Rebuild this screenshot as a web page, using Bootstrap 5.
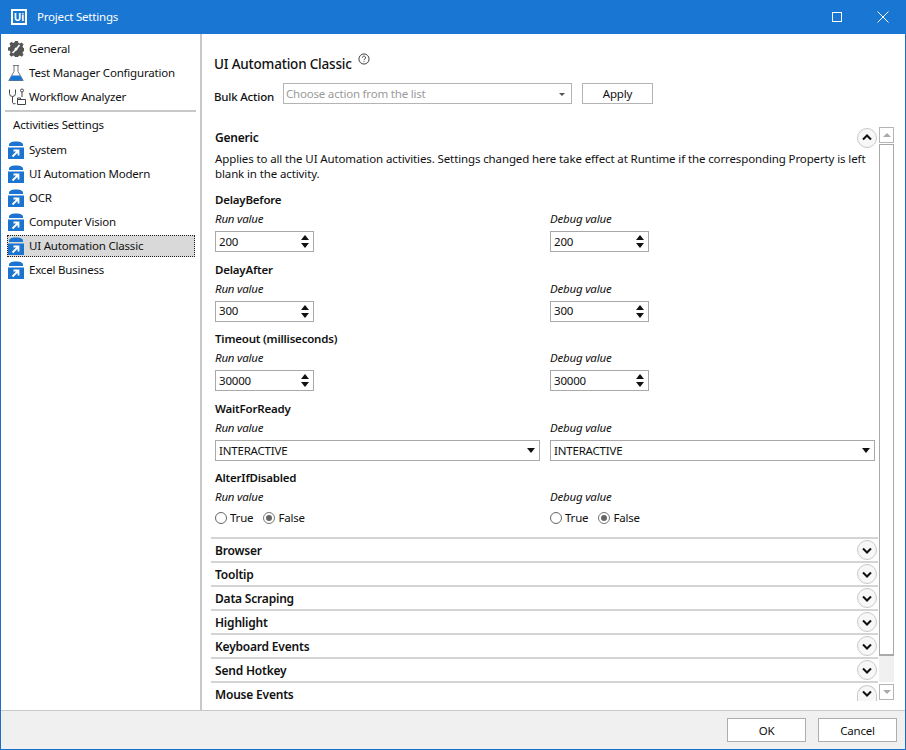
<!DOCTYPE html>
<html lang="en"><head><meta charset="utf-8"><title>Project Settings</title>
<link href="https://cdn.jsdelivr.net/npm/bootstrap@5.3.0/dist/css/bootstrap.min.css" rel="stylesheet">
<style>
html,body{height:100%;overflow:hidden}
body{font-family:"Noto Sans","Open Sans",sans-serif;font-size:11.5px;color:#111;background:#fff;letter-spacing:-.2px}
.win{height:750px;border:solid #1a6fc4;border-width:0 1px 1px 1px}
.tbar{height:34px;background:#1976d2;color:#fff;margin:0 -1px;padding-left:11px}
.logo{width:16px;height:16px;border:2px solid #fff;font-size:10px;font-weight:700;line-height:12px;text-align:center;letter-spacing:0;background:#1976d2}
.ttl{margin-left:10px}
.wbtn{width:46px;height:34px}
.side{width:201px;border-right:2px solid #c8c8c8;flex:none;padding-top:3px}
.sitem{height:24px;padding:0 1px;margin-left:6px;margin-right:5px}
.sitem svg{margin-right:5px;flex:none}
.sel{background:#d9d9d9;outline:1px dotted #222;outline-offset:-1px;height:22px;margin-top:1px;margin-bottom:1px}
.sep{border-top:2px solid #c8c8c8;margin:1px 4px 0 4px}
.shead{height:25px;padding-left:12px;margin-bottom:1px}
.mainp{min-width:0;padding-left:12px}
.ptitle{font-size:13.5px;font-weight:500;height:20px;line-height:20px;margin-top:20px}
.ptitle svg{margin:-1px 0 0 6px}
.bulk{height:21px;margin-top:9px}
.blab{width:69px;font-weight:500;padding-top:5px}
.fakesel{border:1px solid #b4b4b4;color:#9a9a9a;width:289px;height:21px;padding:1px 2px 0}
.caret{width:0;height:0;border-left:3px solid transparent;border-right:3px solid transparent;border-top:3px solid #555}
.applyb{width:71px;height:21px;margin-left:10px;border:1px solid #b4b4b4;background:#fff;font-size:11.5px;padding:0;color:#111;border-radius:0;letter-spacing:-.2px}
.pane{height:575px;margin-left:-3px;margin-top:23px}
.scrollc{width:667px;height:576px;overflow:hidden;flex:none}
.ghead{height:22px;margin-bottom:1px;padding:0 1px 0 4px;font-weight:600;font-size:12px}
.gtxt{padding-left:4px;line-height:15px;margin-top:2px;width:664px;margin-bottom:11px;letter-spacing:-.12px}
.fname{padding-left:4px;font-weight:600;line-height:16px;height:16px}
.flab{font-style:italic;line-height:16px;height:16px;margin-top:3px}
.fcols{padding-left:4px;margin-bottom:9.5px}
.lastc{margin-bottom:9px}
.fc1{width:335px;flex:none}
.fc2{width:325px;flex:none}
.spin{width:99px;height:21px;border:1px solid #a9a9a9;margin-top:4px;padding:0 4px 0 3px}
.arrows{gap:3px}
.arr-u,.arr-d{width:0;height:0;border-left:4px solid transparent;border-right:4px solid transparent}
.arr-u{border-bottom:5px solid #111}.arr-d{border-top:5px solid #111}
.drop{width:325px;height:21px;border:1px solid #a9a9a9;margin-top:4px;padding:1px 4px 0 3px}
.radios{height:21px;margin-top:2px;gap:10px}
.rad{width:12px;height:12px;border:1px solid #666;border-radius:50%;margin-right:3px;background:#fff}
.rad.on{position:relative;border-color:#777}
.rad.on::after{content:"";position:absolute;left:2px;top:2px;width:6px;height:6px;border-radius:50%;background:#666}
.sect{height:24px;border-top:2px solid #d4d4d4;padding:0 1px 0 4px;font-weight:600;font-size:12px;line-height:12px}
.sect>span:first-child{padding-top:1px}
.circ{width:20px;height:20px;border:1px solid #c9c9c9;border-radius:50%;background:#f7f7f7;flex:none}
.cup{margin-top:-1px}
.clipc{height:16px;align-self:flex-start;margin-top:2px;border-bottom:0;border-radius:10px 10px 0 0}
.sbar{width:15px;margin-left:1px;height:573px;flex:none}
.sbtn{height:16px;border:1px solid #b4b4b4;flex:none}
.sthumb{height:512px;border:1px solid #a9a9a9;border-bottom-width:2px;margin-top:1px;flex:none}
.strack{height:26px;background:#f0f0f0;flex:none}
.sdown{margin-top:2px}
.foot{height:39px;border-top:1px solid #c8c8c8;background:#f0f0f0;padding:7px 8px 0 0;gap:12px}
.fbtn{width:79px;height:24px;border:1px solid #adadad;background:#fff;padding:1px 0 0;font-size:11.5px;color:#111;border-radius:0;letter-spacing:-.2px}
.up-s,.dn-s{width:0;height:0;border-left:4px solid transparent;border-right:4px solid transparent}
.up-s{border-bottom:4px solid #aaa}.dn-s{border-top:4px solid #aaa}
</style></head><body>
<div class="win d-flex flex-column">
 <div class="tbar d-flex align-items-center flex-none">
  <div class="logo">Ui</div><div class="ttl">Project Settings</div>
  <div class="ms-auto d-flex">
   <div class="wbtn d-flex align-items-center justify-content-center"><svg width="10" height="10"><rect x=".5" y=".5" width="9" height="9" fill="none" stroke="#fff"/></svg></div>
   <div class="wbtn d-flex align-items-center justify-content-center"><svg width="12" height="12"><path d="M.5.5l11 11M11.500.5l-11 11" stroke="#fff" fill="none"/></svg></div>
  </div>
 </div>
 <div class="d-flex flex-grow-1" style="min-height:0">
  <div class="side">
   <div class="sitem d-flex align-items-center"><svg width="16" height="16" viewBox="0 0 16 16"><path fill="#555" d="M6.500 0h3l.4 2 1.500.6L13.100 1.500l2 2-1.100 1.700.6 1.500 1.900.4v3l-1.900.4-.6 1.500 1.100 1.700-2 2-1.700-1.100-1.500.6-.4 1.900h-3l-.4-1.900-1.500-.6-1.700 1.100-2-2L2 11.300l-.6-1.500L-.5 9.400v-3l1.900-.4L2 4.500.9 2.800l2-2L4.600 1.900l1.500-.6z" transform="translate(.5 0)"/><path d="M4.500 12l3.500-3.500M8 8.500l3.500-4.500" stroke="#fff" stroke-width="1.600"/><circle cx="8" cy="8" r="1.500" fill="#fff"/></svg>General</div>
   <div class="sitem d-flex align-items-center"><svg width="16" height="18" viewBox="0 0 16 18"><path d="M5 1.500h6M6 1.500v6L.8 16.500h14.400L10 7.500v-6" fill="#fff" stroke="#777"/><path d="M4 11.500h8l3 5H1z" fill="#1976d2"/></svg>Test Manager Configuration</div>
   <div class="sitem d-flex align-items-center"><svg width="18" height="18" viewBox="0 0 18 18" style="margin-right:3px" fill="none" stroke="#444"><path d="M1.500 1.500v4a3 3 0 0 0 6 0v-4M4.500 8.500v6a2 2 0 0 0 3 1"/><circle cx="14" cy="2.500" r="1.500"/><path d="M14 4v5M9.500 11.500h8v5h-8zM9.500 11.500v-1.500h3v1.500"/></svg>Workflow Analyzer</div>
   <div class="sep"></div>
   <div class="shead d-flex align-items-center">Activities Settings</div>
   <div class="sitem d-flex align-items-center"><svg width="16" height="18"><use href="#pk"/></svg>System</div>
   <div class="sitem d-flex align-items-center"><svg width="16" height="18"><use href="#pk"/></svg>UI Automation Modern</div>
   <div class="sitem d-flex align-items-center"><svg width="16" height="18"><use href="#pk"/></svg>OCR</div>
   <div class="sitem d-flex align-items-center"><svg width="16" height="18"><use href="#pk"/></svg>Computer Vision</div>
   <div class="sitem sel d-flex align-items-center"><svg width="16" height="18"><use href="#pk"/></svg>UI Automation Classic</div>
   <div class="sitem d-flex align-items-center"><svg width="16" height="18"><use href="#pk"/></svg>Excel Business</div>
  </div>
  <div class="mainp flex-grow-1">
   <div class="ptitle d-flex">UI Automation Classic<svg width="12" height="12" viewBox="0 0 13 13" fill="none" stroke="#333"><circle cx="6.500" cy="6.500" r="5.500"/><path d="M4.800 5a1.700 1.700 0 1 1 2.600 1.500c-.6.400-.9.700-.9 1.400"/><path d="M6.500 9v1"/></svg></div>
   <div class="bulk d-flex">
    <div class="blab">Bulk Action</div>
    <div class="fakesel d-flex align-items-center justify-content-between"><span>Choose action from the list</span><span class="caret me-1"></span></div>
    <button class="applyb btn">Apply</button>
   </div>
   <div class="pane d-flex">
    <div class="scrollc">
     <div class="ghead d-flex align-items-center justify-content-between"><span>Generic</span><span class="circ cup d-flex align-items-center justify-content-center"><svg width="10" height="7"><path d="M1 5.500l4-4 4 4" fill="none" stroke="#111" stroke-width="2"/></svg></span></div>
     <div class="gtxt">Applies to all the UI Automation activities. Settings changed here take effect at Runtime if the corresponding Property is left blank in the activity.</div>

     <div class="fname">DelayBefore</div>
     <div class="fcols d-flex">
      <div class="fc1"><div class="flab">Run value</div><div class="spin d-flex align-items-center justify-content-between"><span>200</span><span class="arrows d-flex flex-column"><i class="arr-u"></i><i class="arr-d"></i></span></div></div>
      <div class="fc2"><div class="flab">Debug value</div><div class="spin d-flex align-items-center justify-content-between"><span>200</span><span class="arrows d-flex flex-column"><i class="arr-u"></i><i class="arr-d"></i></span></div></div>
     </div>
     <div class="fname">DelayAfter</div>
     <div class="fcols d-flex">
      <div class="fc1"><div class="flab">Run value</div><div class="spin d-flex align-items-center justify-content-between"><span>300</span><span class="arrows d-flex flex-column"><i class="arr-u"></i><i class="arr-d"></i></span></div></div>
      <div class="fc2"><div class="flab">Debug value</div><div class="spin d-flex align-items-center justify-content-between"><span>300</span><span class="arrows d-flex flex-column"><i class="arr-u"></i><i class="arr-d"></i></span></div></div>
     </div>
     <div class="fname">Timeout (milliseconds)</div>
     <div class="fcols d-flex">
      <div class="fc1"><div class="flab">Run value</div><div class="spin d-flex align-items-center justify-content-between"><span>30000</span><span class="arrows d-flex flex-column"><i class="arr-u"></i><i class="arr-d"></i></span></div></div>
      <div class="fc2"><div class="flab">Debug value</div><div class="spin d-flex align-items-center justify-content-between"><span>30000</span><span class="arrows d-flex flex-column"><i class="arr-u"></i><i class="arr-d"></i></span></div></div>
     </div>
     <div class="fname">WaitForReady</div>
     <div class="fcols d-flex">
      <div class="fc1"><div class="flab">Run value</div><div class="drop d-flex align-items-center justify-content-between"><span>INTERACTIVE</span><i class="arr-d"></i></div></div>
      <div class="fc2"><div class="flab">Debug value</div><div class="drop d-flex align-items-center justify-content-between"><span>INTERACTIVE</span><i class="arr-d"></i></div></div>
     </div>
     <div class="fname">AlterIfDisabled</div>
     <div class="fcols lastc d-flex">
      <div class="fc1"><div class="flab">Run value</div><div class="radios d-flex align-items-center"><span class="d-flex align-items-center"><i class="rad"></i>True</span><span class="d-flex align-items-center"><i class="rad on"></i>False</span></div></div>
      <div class="fc2"><div class="flab">Debug value</div><div class="radios d-flex align-items-center"><span class="d-flex align-items-center"><i class="rad"></i>True</span><span class="d-flex align-items-center"><i class="rad on"></i>False</span></div></div>
     </div>

     <div class="sect d-flex align-items-center justify-content-between"><span>Browser</span><span class="circ d-flex align-items-center justify-content-center"><svg width="10" height="7"><path d="M1 1.500l4 4 4-4" fill="none" stroke="#111" stroke-width="2"/></svg></span></div>
     <div class="sect d-flex align-items-center justify-content-between"><span>Tooltip</span><span class="circ d-flex align-items-center justify-content-center"><svg width="10" height="7"><path d="M1 1.500l4 4 4-4" fill="none" stroke="#111" stroke-width="2"/></svg></span></div>
     <div class="sect d-flex align-items-center justify-content-between"><span>Data Scraping</span><span class="circ d-flex align-items-center justify-content-center"><svg width="10" height="7"><path d="M1 1.500l4 4 4-4" fill="none" stroke="#111" stroke-width="2"/></svg></span></div>
     <div class="sect d-flex align-items-center justify-content-between"><span>Highlight</span><span class="circ d-flex align-items-center justify-content-center"><svg width="10" height="7"><path d="M1 1.500l4 4 4-4" fill="none" stroke="#111" stroke-width="2"/></svg></span></div>
     <div class="sect d-flex align-items-center justify-content-between"><span>Keyboard Events</span><span class="circ d-flex align-items-center justify-content-center"><svg width="10" height="7"><path d="M1 1.500l4 4 4-4" fill="none" stroke="#111" stroke-width="2"/></svg></span></div>
     <div class="sect d-flex align-items-center justify-content-between"><span>Send Hotkey</span><span class="circ d-flex align-items-center justify-content-center"><svg width="10" height="7"><path d="M1 1.500l4 4 4-4" fill="none" stroke="#111" stroke-width="2"/></svg></span></div>
     <div class="sect d-flex align-items-center justify-content-between"><span>Mouse Events</span><span class="circ clipc d-flex align-items-center justify-content-center"><svg width="10" height="7"><path d="M1 1.500l4 4 4-4" fill="none" stroke="#111" stroke-width="2"/></svg></span></div>
    </div>
    <div class="sbar d-flex flex-column">
     <div class="sbtn d-flex align-items-center justify-content-center"><i class="up-s"></i></div>
     <div class="sthumb"></div>
     <div class="strack"></div>
     <div class="sbtn sdown d-flex align-items-center justify-content-center"><i class="dn-s"></i></div>
    </div>
   </div>
  </div>
 </div>
 <div class="foot d-flex justify-content-end flex-none">
  <button class="fbtn btn">OK</button><button class="fbtn btn">Cancel</button>
 </div>
</div>
<svg width="0" height="0" class="d-none"><defs><symbol id="pk" viewBox="0 0 16 18"><path fill="#1b74cf" d="M1 5V3.500C1 2 3 .5 8 .5s7 1.500 7 3V5z"/><path fill="#1b74cf" d="M0 6.500h16V18H0z"/><path d="M4.500 15.500l6-6M5.500 9.500h5v5" fill="none" stroke="#fff" stroke-width="1.800"/></symbol></defs></svg>
</body></html>
